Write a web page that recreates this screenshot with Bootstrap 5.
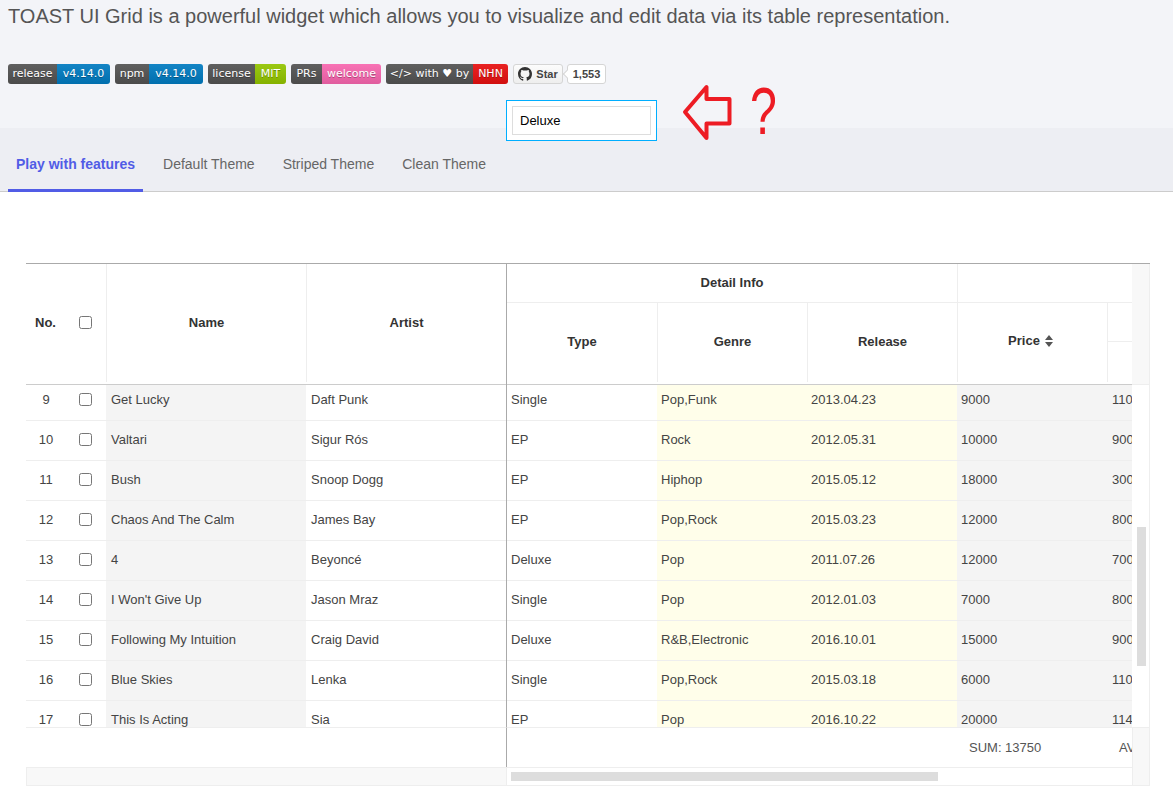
<!DOCTYPE html>
<html lang="en">
<head>
<meta charset="utf-8">
<title>TOAST UI Grid</title>
<link href="https://cdn.jsdelivr.net/npm/bootstrap@5.3.0/dist/css/bootstrap.min.css" rel="stylesheet">
<style>
html,body{height:100%;overflow:hidden}
body{position:relative;background:#fff;font-family:"Liberation Sans",Arial,sans-serif;font-size:13px;color:#333}
.page-top{background:#f3f4f8;height:128px;padding:0 8px}
.intro{font-size:20px;line-height:32px;height:32px;margin:0 0 32px;color:#555;white-space:nowrap}
.badges{height:20px;gap:5px}
.shield{height:20px;border-radius:3px;overflow:hidden;font-family:"DejaVu Sans",sans-serif;font-size:11px;line-height:20px;color:#fff;text-shadow:0 1px 0 rgba(1,1,1,.3)}
.shield span{display:block;text-align:center;white-space:nowrap;background-image:linear-gradient(rgba(187,187,187,.1),rgba(0,0,0,.12))}
.s-dark{background-color:#555}.s-blue{background-color:#007ec6}.s-green{background-color:#97ca00}.s-pink{background-color:#ff69b4}.s-red{background-color:#e11}
.w49{width:49px}.w53{width:53px}.w34{width:34px}.w54{width:54px}.w47{width:47px}.w31{width:31px}.w59{width:59px}.w87{width:87px}.w35{width:35px}
.gh-star{width:50px;height:20px;border:1px solid #d5d5d5;border-radius:3px;background:linear-gradient(#fcfcfc,#eee);font:700 11px/18px "Liberation Sans",sans-serif;color:#444;gap:4px}
.gh-count{position:relative;width:39px;height:20px;margin-left:-1px;border:1px solid #d5d5d5;border-radius:3px;background:#fff;font:700 11px/18px "Liberation Sans",sans-serif;color:#444;text-align:center}
.gh-count::before{content:"";position:absolute;left:-4px;top:6px;width:6px;height:6px;background:#fff;border-left:1px solid #d5d5d5;border-bottom:1px solid #d5d5d5;transform:rotate(45deg)}
.tab-bar{background:#edeef3;height:64px;border-bottom:1px solid #ccc;padding-left:8px;gap:12px;flex-wrap:nowrap}
.tab-bar .nav-link{height:64px;padding:28px 8px 0;font-size:14px;line-height:16px;color:#666;border-bottom:3px solid transparent}
.tab-bar .nav-link.active{color:#515ce6;font-weight:700;border-bottom-color:#515ce6}
.datagrid{margin:71px 0 0 26px;width:1124px}
.pane-left{width:481px;flex:none}
.pane-right{width:625px;flex:none;overflow:hidden}
.pane-side{width:18px;flex:none}
.g-head{height:121px;border-bottom:1px solid #ccc;padding-bottom:2px;background:#fff}
.topline{border-top:1px solid #aaa}
.g-body{height:342px;overflow:hidden;background:#fff}
.g-rows{margin-top:-4px}
.g-row{height:40px;border-bottom:1px solid #eee;line-height:38px;color:#444;white-space:nowrap}
.g-sum{height:40px;border-top:1px solid #eee;background:#fff;color:#555;white-space:nowrap;line-height:39px}
.g-scroll{height:19px;border-top:1px solid #eee;border-bottom:1px solid #eee}
.frozen{border-right:1px solid #aaa}
.cn{width:40px;flex:none;text-align:center}
.cc{width:40px;flex:none;display:flex;align-items:center;justify-content:center;padding:0 1px 3px 0}
.cc input,.c-cb-h input{width:13px;height:13px;margin:0}
.cw200{width:200px;flex:none;padding-left:5px;overflow:hidden}
.cw150{width:150px;flex:none;padding-left:4px;overflow:hidden}
.c-next{padding-left:5px}
.c-sumcell{width:150px;flex:none;padding-left:12px}
.sum-gap{width:450px;flex:none}
.sub-stack{width:25px;flex:none}
.tint-grey{background:#f4f4f4}
.tint-yellow{background:#fffeea}
.h-cell{font-size:13px;font-weight:700;color:#333;display:flex;align-items:center;justify-content:center;flex:none;box-sizing:border-box}
.h-l{border-left:1px solid #eee}
.h-b{border-bottom:1px solid #eee}
.c-no-h{width:40px;height:118px;padding-right:1px}
.c-cb-h{width:40px;height:118px;padding:0 1px 2px 0}
.c-name-h{width:200px;height:118px}
.c-detail{width:450px;height:39px}
.c-blank{width:175px;height:39px}
.c-col{width:150px;height:79px;padding-bottom:2px}
.c-sub{width:25px;height:39px}
.c-sub2{width:25px;height:40px}
.c-price{gap:5px;padding:0 4px 4px 0}
.left-scroll{background:#f8f8f8;border-left:1px solid #eee;border-right:1px solid #eee;width:481px}
.right-scroll{padding:4px 0 0 4px;background:#fff}
.hthumb{width:427px;height:9px;background:#ddd}
.side-head{height:121px;background:#f8f8f8;border-bottom:1px solid #eee;border-right:1px solid #eee}
.side-body{height:342px;padding:142px 0 0 5px;background:#fff;border-right:1px solid #eee}
.vthumb{width:9px;height:139px;background:#ddd}
.side-foot{height:59px;background:#f8f8f8;border:1px solid #eee}
.note-box{position:absolute;left:506px;top:100px;width:151px;height:41px;padding:5px;border:1px solid #00aeff;background:#fff}
.note-box input{display:block;width:139px;height:29px;padding:0 7px;border:1px solid #ddd;border-radius:0;font:13px "Liberation Sans",sans-serif;color:#000;background:#fff;outline:0}
.note-arrow{position:absolute;left:680px;top:82px}
.note-q{position:absolute;left:750px;top:72px;font:400 67px/78px "Liberation Sans",sans-serif;color:#ed1c24;transform:scaleX(.72);transform-origin:left top}
</style>
</head>
<body>
<div class="page-top">
  <p class="intro">TOAST UI Grid is a powerful widget which allows you to visualize and edit data via its table representation.</p>
  <div class="badges d-flex">
    <div class="shield d-flex"><span class="s-dark w49">release</span><span class="s-blue w53">v4.14.0</span></div>
    <div class="shield d-flex"><span class="s-dark w34">npm</span><span class="s-blue w54">v4.14.0</span></div>
    <div class="shield d-flex"><span class="s-dark w47">license</span><span class="s-green w31">MIT</span></div>
    <div class="shield d-flex"><span class="s-dark w31">PRs</span><span class="s-pink w59">welcome</span></div>
    <div class="shield d-flex"><span class="s-dark w87">&lt;/&gt; with ♥ by</span><span class="s-red w35">NHN</span></div>
    <div class="gh-star d-flex align-items-center justify-content-center">
      <svg width="14" height="14" viewBox="0 0 16 16" fill="#333"><path d="M8 0C3.58 0 0 3.58 0 8c0 3.54 2.29 6.53 5.47 7.59.4.07.55-.17.55-.38 0-.19-.01-.82-.01-1.49-2.01.37-2.53-.49-2.69-.94-.09-.23-.48-.94-.82-1.13-.28-.15-.68-.52-.01-.53.63-.01 1.08.58 1.23.82.72 1.21 1.87.87 2.33.66.07-.52.28-.87.51-1.07-1.78-.2-3.64-.89-3.64-3.95 0-.87.31-1.59.82-2.15-.08-.2-.36-1.02.08-2.12 0 0 .67-.21 2.2.82.64-.18 1.32-.27 2-.27.68 0 1.36.09 2 .27 1.53-1.04 2.2-.82 2.2-.82.44 1.1.16 1.92.08 2.12.51.56.82 1.27.82 2.15 0 3.07-1.87 3.75-3.65 3.95.29.25.54.73.54 1.48 0 1.07-.01 1.93-.01 2.2 0 .21.15.46.55.38A8.013 8.013 0 0016 8c0-4.42-3.58-8-8-8z"/></svg>
      <span>Star</span>
    </div>
    <div class="gh-count">1,553</div>
  </div>
</div>

<ul class="nav tab-bar">
  <li class="nav-item"><a class="nav-link active" href="#">Play with features</a></li>
  <li class="nav-item"><a class="nav-link" href="#">Default Theme</a></li>
  <li class="nav-item"><a class="nav-link" href="#">Striped Theme</a></li>
  <li class="nav-item"><a class="nav-link" href="#">Clean Theme</a></li>
</ul>

<div class="datagrid d-flex">
  <div class="pane-left">
    <div class="topline frozen">
      <div class="g-head d-flex">
        <div class="h-cell c-no-h">No.</div>
        <div class="h-cell c-cb-h"><input type="checkbox" aria-label="Select all"></div>
        <div class="h-cell c-name-h h-l">Name</div>
        <div class="h-cell c-name-h h-l">Artist</div>
      </div>
    </div>
    <div class="g-body frozen">
      <div class="g-rows">
        <div class="g-row d-flex"><div class="cn">9</div><div class="cc"><input type="checkbox"></div><div class="cw200 tint-grey">Get Lucky</div><div class="cw200">Daft Punk</div></div>
        <div class="g-row d-flex"><div class="cn">10</div><div class="cc"><input type="checkbox"></div><div class="cw200 tint-grey">Valtari</div><div class="cw200">Sigur Rós</div></div>
        <div class="g-row d-flex"><div class="cn">11</div><div class="cc"><input type="checkbox"></div><div class="cw200 tint-grey">Bush</div><div class="cw200">Snoop Dogg</div></div>
        <div class="g-row d-flex"><div class="cn">12</div><div class="cc"><input type="checkbox"></div><div class="cw200 tint-grey">Chaos And The Calm</div><div class="cw200">James Bay</div></div>
        <div class="g-row d-flex"><div class="cn">13</div><div class="cc"><input type="checkbox"></div><div class="cw200 tint-grey">4</div><div class="cw200">Beyoncé</div></div>
        <div class="g-row d-flex"><div class="cn">14</div><div class="cc"><input type="checkbox"></div><div class="cw200 tint-grey">I Won't Give Up</div><div class="cw200">Jason Mraz</div></div>
        <div class="g-row d-flex"><div class="cn">15</div><div class="cc"><input type="checkbox"></div><div class="cw200 tint-grey">Following My Intuition</div><div class="cw200">Craig David</div></div>
        <div class="g-row d-flex"><div class="cn">16</div><div class="cc"><input type="checkbox"></div><div class="cw200 tint-grey">Blue Skies</div><div class="cw200">Lenka</div></div>
        <div class="g-row d-flex"><div class="cn">17</div><div class="cc"><input type="checkbox"></div><div class="cw200 tint-grey">This Is Acting</div><div class="cw200">Sia</div></div>
      </div>
    </div>
    <div class="g-sum frozen"></div>
    <div class="g-scroll left-scroll"></div>
  </div>

  <div class="pane-right">
    <div class="topline">
      <div class="g-head">
        <div class="d-flex">
          <div class="h-cell c-detail h-b">Detail Info</div>
          <div class="h-cell c-blank h-b h-l"></div>
        </div>
        <div class="d-flex">
          <div class="h-cell c-col">Type</div>
          <div class="h-cell c-col h-l">Genre</div>
          <div class="h-cell c-col h-l">Release</div>
          <div class="h-cell c-col h-l c-price">Price
            <svg width="8" height="12" viewBox="0 0 8 12" fill="#555"><path d="M4 0 8 5H0zM0 7h8l-4 5z"/></svg>
          </div>
          <div class="sub-stack">
            <div class="h-cell c-sub h-l h-b"></div>
            <div class="h-cell c-sub2 h-l"></div>
          </div>
        </div>
      </div>
    </div>
    <div class="g-body">
      <div class="g-rows">
        <div class="g-row d-flex"><div class="cw150">Single</div><div class="cw150 tint-yellow">Pop,Funk</div><div class="cw150 tint-yellow">2013.04.23</div><div class="cw150 tint-grey">9000</div><div class="cw150 tint-grey c-next">110</div></div>
        <div class="g-row d-flex"><div class="cw150">EP</div><div class="cw150 tint-yellow">Rock</div><div class="cw150 tint-yellow">2012.05.31</div><div class="cw150 tint-grey">10000</div><div class="cw150 tint-grey c-next">900</div></div>
        <div class="g-row d-flex"><div class="cw150">EP</div><div class="cw150 tint-yellow">Hiphop</div><div class="cw150 tint-yellow">2015.05.12</div><div class="cw150 tint-grey">18000</div><div class="cw150 tint-grey c-next">300</div></div>
        <div class="g-row d-flex"><div class="cw150">EP</div><div class="cw150 tint-yellow">Pop,Rock</div><div class="cw150 tint-yellow">2015.03.23</div><div class="cw150 tint-grey">12000</div><div class="cw150 tint-grey c-next">800</div></div>
        <div class="g-row d-flex"><div class="cw150">Deluxe</div><div class="cw150 tint-yellow">Pop</div><div class="cw150 tint-yellow">2011.07.26</div><div class="cw150 tint-grey">12000</div><div class="cw150 tint-grey c-next">700</div></div>
        <div class="g-row d-flex"><div class="cw150">Single</div><div class="cw150 tint-yellow">Pop</div><div class="cw150 tint-yellow">2012.01.03</div><div class="cw150 tint-grey">7000</div><div class="cw150 tint-grey c-next">800</div></div>
        <div class="g-row d-flex"><div class="cw150">Deluxe</div><div class="cw150 tint-yellow">R&amp;B,Electronic</div><div class="cw150 tint-yellow">2016.10.01</div><div class="cw150 tint-grey">15000</div><div class="cw150 tint-grey c-next">900</div></div>
        <div class="g-row d-flex"><div class="cw150">Single</div><div class="cw150 tint-yellow">Pop,Rock</div><div class="cw150 tint-yellow">2015.03.18</div><div class="cw150 tint-grey">6000</div><div class="cw150 tint-grey c-next">110</div></div>
        <div class="g-row d-flex"><div class="cw150">EP</div><div class="cw150 tint-yellow">Pop</div><div class="cw150 tint-yellow">2016.10.22</div><div class="cw150 tint-grey">20000</div><div class="cw150 tint-grey c-next">114</div></div>
      </div>
    </div>
    <div class="g-sum d-flex">
      <div class="sum-gap"></div>
      <div class="c-sumcell">SUM: 13750</div>
      <div class="c-sumcell">AVG: 11458</div>
    </div>
    <div class="g-scroll right-scroll"><div class="hthumb"></div></div>
  </div>

  <div class="pane-side">
    <div class="topline"><div class="side-head"></div></div>
    <div class="side-body"><div class="vthumb"></div></div>
    <div class="side-foot"></div>
  </div>
</div>

<div class="note-box"><input type="text" value="Deluxe" aria-label="Type filter"></div>
<svg class="note-arrow" width="56" height="62" viewBox="680 82 56 62" fill="none" stroke="#ed1c24" stroke-width="4" stroke-linejoin="round"><path d="M685 112 706.5 87V99H729.5V123.5H706.5V138Z"/></svg>
<div class="note-q">?</div>

<script src="https://cdn.jsdelivr.net/npm/bootstrap@5.3.0/dist/js/bootstrap.bundle.min.js"></script>
</body>
</html>
